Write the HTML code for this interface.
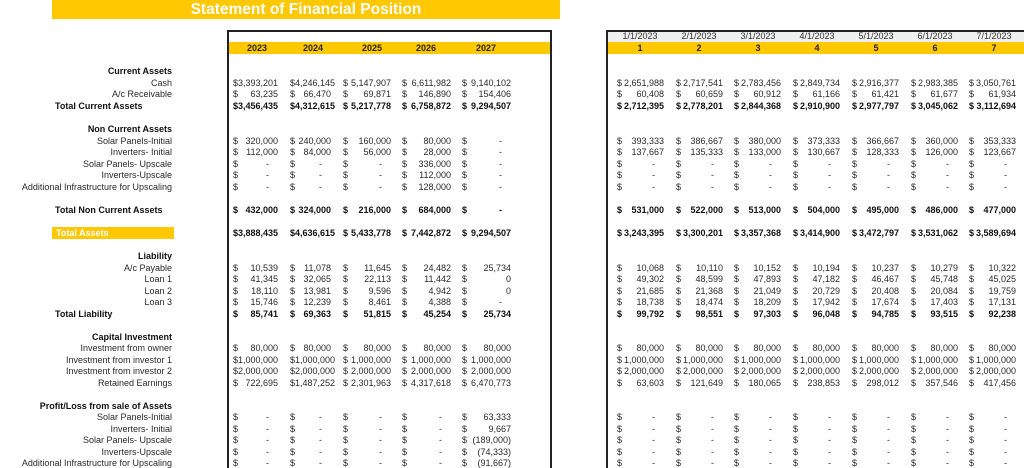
<!DOCTYPE html>
<html><head><meta charset="utf-8"><style>
*{margin:0;padding:0;box-sizing:border-box}
html{width:1024px;height:468px;overflow:hidden}
body{width:1024px;height:468px;overflow:hidden;background:#fff;font-family:"Liberation Sans",Arial,sans-serif;font-size:9px;color:#2a2a2a;position:relative}
.title{position:absolute;left:52px;top:0;width:508px;height:19px;background:#ffc800;color:#fff;font-weight:bold;font-size:15.5px;text-align:center;line-height:19px}
.boxL{position:absolute;left:227px;top:30px;width:325px;height:442px;border:2px solid #222}
.boxR{position:absolute;left:606px;top:30px;width:430px;height:442px;border:2px solid #222}
.yL{position:absolute;left:229px;top:42px;width:321px;height:12px;background:#ffc800}
.gR{position:absolute;left:608px;top:32px;width:416px;height:10px;background:#f0f0f0}
.yR{position:absolute;left:608px;top:42px;width:416px;height:12px;background:#ffc800}
.hd{position:absolute;top:42px;height:12px;line-height:12px;font-weight:bold;text-align:center;width:50px;color:#222}
.dt{position:absolute;top:31px;height:11px;line-height:11px;text-align:center;width:56px;color:#333}
.r{position:absolute;left:0;width:1024px;height:12px;line-height:12px}
.r.b{font-weight:bold;color:#111}
.l{position:absolute;right:852px;white-space:nowrap}
.t{position:absolute;left:55px;font-weight:bold;white-space:nowrap;color:#111}
.ta{position:absolute;left:52px;width:122px;height:12px;background:#ffc800;color:#fff;font-weight:bold;padding-left:4px}
.r span{position:absolute;display:flex;justify-content:space-between;white-space:nowrap}
.r span em{font-style:normal}
.r span em.d{padding-right:9px}
.L span:nth-child(1){left:233px;width:45px}
.L span:nth-child(2){left:290px;width:41px}
.L span:nth-child(3){left:343px;width:48px}
.L span:nth-child(4){left:402px;width:49px}
.L span:nth-child(5){left:462px;width:49px}
.R span:nth-child(1){left:617px;width:47px}
.R span:nth-child(2){left:676px;width:47px}
.R span:nth-child(3){left:734px;width:47px}
.R span:nth-child(4){left:793px;width:47px}
.R span:nth-child(5){left:852px;width:47px}
.R span:nth-child(6){left:911px;width:47px}
.R span:nth-child(7){left:969px;width:47px}
.g{position:absolute;left:0;top:0}
</style></head><body>
<div class="title">Statement of Financial Position</div>
<div class="boxL"></div><div class="boxR"></div>
<div class="yL"></div><div class="gR"></div><div class="yR"></div>
<div class="hd" style="left:232px">2023</div><div class="hd" style="left:288px">2024</div><div class="hd" style="left:347px">2025</div><div class="hd" style="left:401px">2026</div><div class="hd" style="left:461px">2027</div>
<div class="dt" style="left:612px">1/1/2023</div><div class="dt" style="left:671px">2/1/2023</div><div class="dt" style="left:730px">3/1/2023</div><div class="dt" style="left:789px">4/1/2023</div><div class="dt" style="left:848px">5/1/2023</div><div class="dt" style="left:907px">6/1/2023</div><div class="dt" style="left:966px">7/1/2023</div>
<div class="hd" style="left:615px">1</div><div class="hd" style="left:674px">2</div><div class="hd" style="left:733px">3</div><div class="hd" style="left:792px">4</div><div class="hd" style="left:851px">5</div><div class="hd" style="left:910px">6</div><div class="hd" style="left:969px">7</div>

<div class="r b" style="top:65px"><div class="l">Current Assets</div></div>
<div class="r" style="top:76.5px"><div class="l">Cash</div>
<div class="g L"><span>$<em>3,393,201</em></span><span>$<em>4,246,145</em></span><span>$<em>5,147,907</em></span><span>$<em>6,611,982</em></span><span>$<em>9,140,102</em></span></div>
<div class="g R"><span>$<em>2,651,988</em></span><span>$<em>2,717,541</em></span><span>$<em>2,783,456</em></span><span>$<em>2,849,734</em></span><span>$<em>2,916,377</em></span><span>$<em>2,983,385</em></span><span>$<em>3,050,761</em></span></div></div>
<div class="r" style="top:88px"><div class="l">A/c Receivable</div>
<div class="g L"><span>$<em>63,235</em></span><span>$<em>66,470</em></span><span>$<em>69,871</em></span><span>$<em>146,890</em></span><span>$<em>154,406</em></span></div>
<div class="g R"><span>$<em>60,408</em></span><span>$<em>60,659</em></span><span>$<em>60,912</em></span><span>$<em>61,166</em></span><span>$<em>61,421</em></span><span>$<em>61,677</em></span><span>$<em>61,934</em></span></div></div>
<div class="r b" style="top:99.5px"><div class="t">Total Current Assets</div>
<div class="g L"><span>$<em>3,456,435</em></span><span>$<em>4,312,615</em></span><span>$<em>5,217,778</em></span><span>$<em>6,758,872</em></span><span>$<em>9,294,507</em></span></div>
<div class="g R"><span>$<em>2,712,395</em></span><span>$<em>2,778,201</em></span><span>$<em>2,844,368</em></span><span>$<em>2,910,900</em></span><span>$<em>2,977,797</em></span><span>$<em>3,045,062</em></span><span>$<em>3,112,694</em></span></div></div>

<div class="r b" style="top:123px"><div class="l">Non Current Assets</div></div>
<div class="r" style="top:134.5px"><div class="l">Solar Panels-Initial</div>
<div class="g L"><span>$<em>320,000</em></span><span>$<em>240,000</em></span><span>$<em>160,000</em></span><span>$<em>80,000</em></span><span>$<em class="d">-</em></span></div>
<div class="g R"><span>$<em>393,333</em></span><span>$<em>386,667</em></span><span>$<em>380,000</em></span><span>$<em>373,333</em></span><span>$<em>366,667</em></span><span>$<em>360,000</em></span><span>$<em>353,333</em></span></div></div>
<div class="r" style="top:146px"><div class="l">Inverters- Initial</div>
<div class="g L"><span>$<em>112,000</em></span><span>$<em>84,000</em></span><span>$<em>56,000</em></span><span>$<em>28,000</em></span><span>$<em class="d">-</em></span></div>
<div class="g R"><span>$<em>137,667</em></span><span>$<em>135,333</em></span><span>$<em>133,000</em></span><span>$<em>130,667</em></span><span>$<em>128,333</em></span><span>$<em>126,000</em></span><span>$<em>123,667</em></span></div></div>
<div class="r" style="top:157.5px"><div class="l">Solar Panels- Upscale</div>
<div class="g L"><span>$<em class="d">-</em></span><span>$<em class="d">-</em></span><span>$<em class="d">-</em></span><span>$<em>336,000</em></span><span>$<em class="d">-</em></span></div>
<div class="g R"><span>$<em class="d">-</em></span><span>$<em class="d">-</em></span><span>$<em class="d">-</em></span><span>$<em class="d">-</em></span><span>$<em class="d">-</em></span><span>$<em class="d">-</em></span><span>$<em class="d">-</em></span></div></div>
<div class="r" style="top:169px"><div class="l">Inverters-Upscale</div>
<div class="g L"><span>$<em class="d">-</em></span><span>$<em class="d">-</em></span><span>$<em class="d">-</em></span><span>$<em>112,000</em></span><span>$<em class="d">-</em></span></div>
<div class="g R"><span>$<em class="d">-</em></span><span>$<em class="d">-</em></span><span>$<em class="d">-</em></span><span>$<em class="d">-</em></span><span>$<em class="d">-</em></span><span>$<em class="d">-</em></span><span>$<em class="d">-</em></span></div></div>
<div class="r" style="top:180.5px"><div class="l">Additional Infrastructure for Upscaling</div>
<div class="g L"><span>$<em class="d">-</em></span><span>$<em class="d">-</em></span><span>$<em class="d">-</em></span><span>$<em>128,000</em></span><span>$<em class="d">-</em></span></div>
<div class="g R"><span>$<em class="d">-</em></span><span>$<em class="d">-</em></span><span>$<em class="d">-</em></span><span>$<em class="d">-</em></span><span>$<em class="d">-</em></span><span>$<em class="d">-</em></span><span>$<em class="d">-</em></span></div></div>

<div class="r b" style="top:203.5px"><div class="t">Total Non Current Assets</div>
<div class="g L"><span>$<em>432,000</em></span><span>$<em>324,000</em></span><span>$<em>216,000</em></span><span>$<em>684,000</em></span><span>$<em class="d">-</em></span></div>
<div class="g R"><span>$<em>531,000</em></span><span>$<em>522,000</em></span><span>$<em>513,000</em></span><span>$<em>504,000</em></span><span>$<em>495,000</em></span><span>$<em>486,000</em></span><span>$<em>477,000</em></span></div></div>

<div class="r b" style="top:226.5px"><div class="ta">Total Assets</div>
<div class="g L"><span>$<em>3,888,435</em></span><span>$<em>4,636,615</em></span><span>$<em>5,433,778</em></span><span>$<em>7,442,872</em></span><span>$<em>9,294,507</em></span></div>
<div class="g R"><span>$<em>3,243,395</em></span><span>$<em>3,300,201</em></span><span>$<em>3,357,368</em></span><span>$<em>3,414,900</em></span><span>$<em>3,472,797</em></span><span>$<em>3,531,062</em></span><span>$<em>3,589,694</em></span></div></div>

<div class="r b" style="top:250px"><div class="l">Liability</div></div>
<div class="r" style="top:261.5px"><div class="l">A/c Payable</div>
<div class="g L"><span>$<em>10,539</em></span><span>$<em>11,078</em></span><span>$<em>11,645</em></span><span>$<em>24,482</em></span><span>$<em>25,734</em></span></div>
<div class="g R"><span>$<em>10,068</em></span><span>$<em>10,110</em></span><span>$<em>10,152</em></span><span>$<em>10,194</em></span><span>$<em>10,237</em></span><span>$<em>10,279</em></span><span>$<em>10,322</em></span></div></div>
<div class="r" style="top:273px"><div class="l">Loan 1</div>
<div class="g L"><span>$<em>41,345</em></span><span>$<em>32,065</em></span><span>$<em>22,113</em></span><span>$<em>11,442</em></span><span>$<em>0</em></span></div>
<div class="g R"><span>$<em>49,302</em></span><span>$<em>48,599</em></span><span>$<em>47,893</em></span><span>$<em>47,182</em></span><span>$<em>46,467</em></span><span>$<em>45,748</em></span><span>$<em>45,025</em></span></div></div>
<div class="r" style="top:284.5px"><div class="l">Loan 2</div>
<div class="g L"><span>$<em>18,110</em></span><span>$<em>13,981</em></span><span>$<em>9,596</em></span><span>$<em>4,942</em></span><span>$<em>0</em></span></div>
<div class="g R"><span>$<em>21,685</em></span><span>$<em>21,368</em></span><span>$<em>21,049</em></span><span>$<em>20,729</em></span><span>$<em>20,408</em></span><span>$<em>20,084</em></span><span>$<em>19,759</em></span></div></div>
<div class="r" style="top:296px"><div class="l">Loan 3</div>
<div class="g L"><span>$<em>15,746</em></span><span>$<em>12,239</em></span><span>$<em>8,461</em></span><span>$<em>4,388</em></span><span>$<em class="d">-</em></span></div>
<div class="g R"><span>$<em>18,738</em></span><span>$<em>18,474</em></span><span>$<em>18,209</em></span><span>$<em>17,942</em></span><span>$<em>17,674</em></span><span>$<em>17,403</em></span><span>$<em>17,131</em></span></div></div>
<div class="r b" style="top:307.5px"><div class="t">Total Liability</div>
<div class="g L"><span>$<em>85,741</em></span><span>$<em>69,363</em></span><span>$<em>51,815</em></span><span>$<em>45,254</em></span><span>$<em>25,734</em></span></div>
<div class="g R"><span>$<em>99,792</em></span><span>$<em>98,551</em></span><span>$<em>97,303</em></span><span>$<em>96,048</em></span><span>$<em>94,785</em></span><span>$<em>93,515</em></span><span>$<em>92,238</em></span></div></div>

<div class="r b" style="top:330.5px"><div class="l">Capital Investment</div></div>
<div class="r" style="top:342px"><div class="l">Investment from owner</div>
<div class="g L"><span>$<em>80,000</em></span><span>$<em>80,000</em></span><span>$<em>80,000</em></span><span>$<em>80,000</em></span><span>$<em>80,000</em></span></div>
<div class="g R"><span>$<em>80,000</em></span><span>$<em>80,000</em></span><span>$<em>80,000</em></span><span>$<em>80,000</em></span><span>$<em>80,000</em></span><span>$<em>80,000</em></span><span>$<em>80,000</em></span></div></div>
<div class="r" style="top:353.5px"><div class="l">Investment from investor 1</div>
<div class="g L"><span>$<em>1,000,000</em></span><span>$<em>1,000,000</em></span><span>$<em>1,000,000</em></span><span>$<em>1,000,000</em></span><span>$<em>1,000,000</em></span></div>
<div class="g R"><span>$<em>1,000,000</em></span><span>$<em>1,000,000</em></span><span>$<em>1,000,000</em></span><span>$<em>1,000,000</em></span><span>$<em>1,000,000</em></span><span>$<em>1,000,000</em></span><span>$<em>1,000,000</em></span></div></div>
<div class="r" style="top:365px"><div class="l">Investment from investor 2</div>
<div class="g L"><span>$<em>2,000,000</em></span><span>$<em>2,000,000</em></span><span>$<em>2,000,000</em></span><span>$<em>2,000,000</em></span><span>$<em>2,000,000</em></span></div>
<div class="g R"><span>$<em>2,000,000</em></span><span>$<em>2,000,000</em></span><span>$<em>2,000,000</em></span><span>$<em>2,000,000</em></span><span>$<em>2,000,000</em></span><span>$<em>2,000,000</em></span><span>$<em>2,000,000</em></span></div></div>
<div class="r" style="top:376.5px"><div class="l">Retained Earnings</div>
<div class="g L"><span>$<em>722,695</em></span><span>$<em>1,487,252</em></span><span>$<em>2,301,963</em></span><span>$<em>4,317,618</em></span><span>$<em>6,470,773</em></span></div>
<div class="g R"><span>$<em>63,603</em></span><span>$<em>121,649</em></span><span>$<em>180,065</em></span><span>$<em>238,853</em></span><span>$<em>298,012</em></span><span>$<em>357,546</em></span><span>$<em>417,456</em></span></div></div>

<div class="r b" style="top:399.5px"><div class="l">Profit/Loss from sale of Assets</div></div>
<div class="r" style="top:411px"><div class="l">Solar Panels-Initial</div>
<div class="g L"><span>$<em class="d">-</em></span><span>$<em class="d">-</em></span><span>$<em class="d">-</em></span><span>$<em class="d">-</em></span><span>$<em>63,333</em></span></div>
<div class="g R"><span>$<em class="d">-</em></span><span>$<em class="d">-</em></span><span>$<em class="d">-</em></span><span>$<em class="d">-</em></span><span>$<em class="d">-</em></span><span>$<em class="d">-</em></span><span>$<em class="d">-</em></span></div></div>
<div class="r" style="top:422.5px"><div class="l">Inverters- Initial</div>
<div class="g L"><span>$<em class="d">-</em></span><span>$<em class="d">-</em></span><span>$<em class="d">-</em></span><span>$<em class="d">-</em></span><span>$<em>9,667</em></span></div>
<div class="g R"><span>$<em class="d">-</em></span><span>$<em class="d">-</em></span><span>$<em class="d">-</em></span><span>$<em class="d">-</em></span><span>$<em class="d">-</em></span><span>$<em class="d">-</em></span><span>$<em class="d">-</em></span></div></div>
<div class="r" style="top:434px"><div class="l">Solar Panels- Upscale</div>
<div class="g L"><span>$<em class="d">-</em></span><span>$<em class="d">-</em></span><span>$<em class="d">-</em></span><span>$<em class="d">-</em></span><span>$<em>(189,000)</em></span></div>
<div class="g R"><span>$<em class="d">-</em></span><span>$<em class="d">-</em></span><span>$<em class="d">-</em></span><span>$<em class="d">-</em></span><span>$<em class="d">-</em></span><span>$<em class="d">-</em></span><span>$<em class="d">-</em></span></div></div>
<div class="r" style="top:445.5px"><div class="l">Inverters-Upscale</div>
<div class="g L"><span>$<em class="d">-</em></span><span>$<em class="d">-</em></span><span>$<em class="d">-</em></span><span>$<em class="d">-</em></span><span>$<em>(74,333)</em></span></div>
<div class="g R"><span>$<em class="d">-</em></span><span>$<em class="d">-</em></span><span>$<em class="d">-</em></span><span>$<em class="d">-</em></span><span>$<em class="d">-</em></span><span>$<em class="d">-</em></span><span>$<em class="d">-</em></span></div></div>
<div class="r" style="top:457px"><div class="l">Additional Infrastructure for Upscaling</div>
<div class="g L"><span>$<em class="d">-</em></span><span>$<em class="d">-</em></span><span>$<em class="d">-</em></span><span>$<em class="d">-</em></span><span>$<em>(91,667)</em></span></div>
<div class="g R"><span>$<em class="d">-</em></span><span>$<em class="d">-</em></span><span>$<em class="d">-</em></span><span>$<em class="d">-</em></span><span>$<em class="d">-</em></span><span>$<em class="d">-</em></span><span>$<em class="d">-</em></span></div></div>
</body></html>
